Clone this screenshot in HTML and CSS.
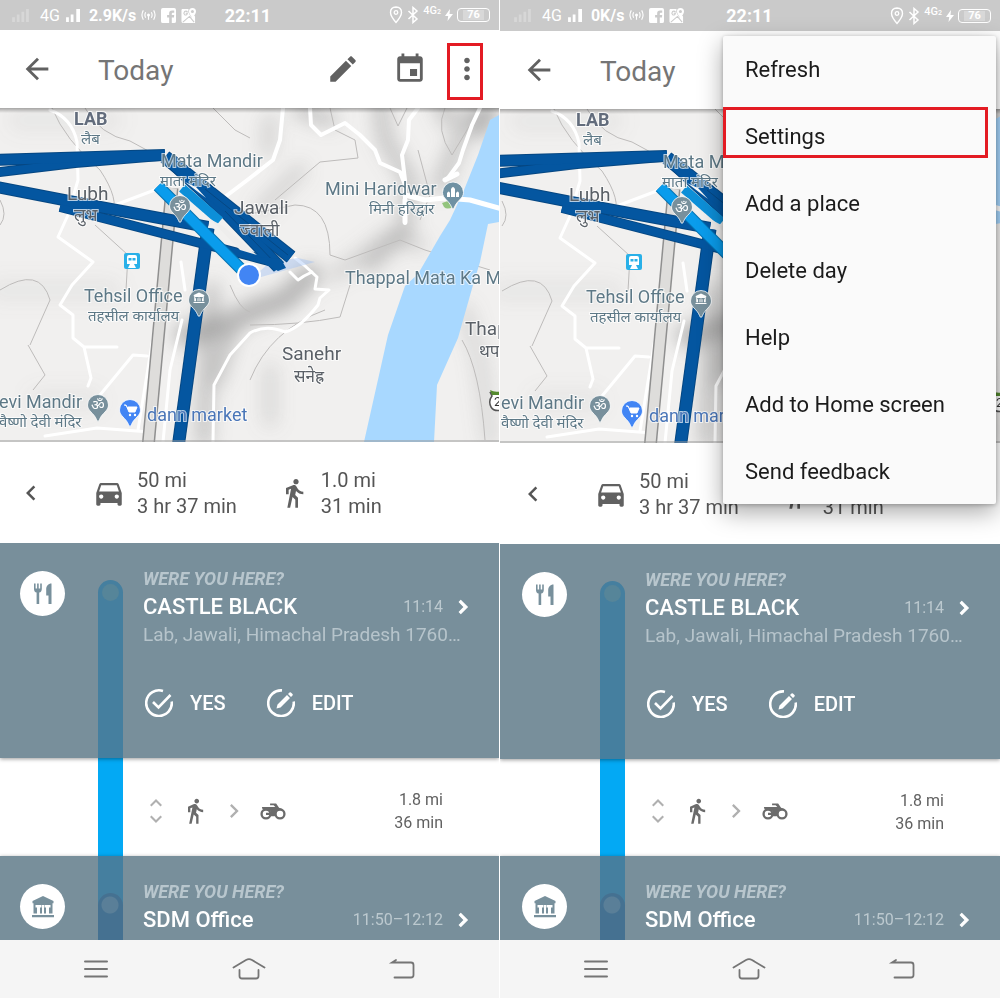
FILE: index.html
```html
<!DOCTYPE html>
<html lang="en">

<head>
    <meta charset="utf-8" />
    <meta name="viewport" content="width=device-width, initial-scale=1" />

    <title>Timeline - Today</title>

    <link rel="stylesheet" href="styles.css">
</head>

<body>
    <!-- shared shapes -->
    <svg class="defs" aria-hidden="true">
        <defs>
            <filter id="soft" x="-50%" y="-50%" width="200%" height="200%">
                <feGaussianBlur stdDeviation="9" />
            </filter>
            <linearGradient id="edge" x1="0" y1="0" x2="0" y2="1">
                <stop offset="0" stop-color="#000" stop-opacity=".3" />
                <stop offset="1" stop-color="#000" stop-opacity="0" />
            </linearGradient>
        </defs>

        <symbol id="back" viewBox="0 0 24 24"><path d="M20 11H7.83l5.59-5.59L12 4l-8 8 8 8 1.41-1.41L7.83 13H20v-2z" /></symbol>
        <symbol id="pencil" viewBox="0 0 24 24"><path d="M3 17.25V21h3.75L17.81 9.94l-3.75-3.75L3 17.25zM20.71 7.04c.39-.39.39-1.02 0-1.41l-2.34-2.34c-.39-.39-1.02-.39-1.41 0l-1.83 1.83 3.75 3.75 1.83-1.83z" /></symbol>
        <symbol id="event" viewBox="0 0 24 24"><path d="M17 12h-5v5h5v-5zM16 1v2H8V1H6v2H5c-1.11 0-1.99.9-1.99 2L3 19c0 1.1.89 2 2 2h14c1.1 0 2-.9 2-2V5c0-1.1-.9-2-2-2h-1V1h-2zm3 18H5V8h14v11z" /></symbol>
        <symbol id="more" viewBox="0 0 24 24"><path d="M12 8c1.100 0 2-.9 2-2s-.9-2-2-2-2 .9-2 2 .9 2 2 2zm0 2c-1.100 0-2 .9-2 2s.9 2 2 2 2-.9 2-2-.9-2-2-2zm0 6c-1.100 0-2 .9-2 2s.9 2 2 2 2-.9 2-2-.9-2-2-2z" /></symbol>
        <symbol id="left" viewBox="0 0 24 24"><path d="M15.410 7.410L14 6l-6 6 6 6 1.410-1.410L10.830 12z" /></symbol>
        <symbol id="right" viewBox="0 0 24 24"><path d="M10 6L8.590 7.410 13.170 12l-4.580 4.590L10 18l6-6z" /></symbol>
        <symbol id="unfold" viewBox="0 0 24 24"><path d="M7.500 7.500L12 3l4.500 4.500M7.500 16.500L12 21l4.500-4.500" fill="none" stroke="currentColor" stroke-width="1.800" /></symbol>
        <symbol id="car" viewBox="0 0 24 24"><path d="M18.920 6.010C18.720 5.420 18.160 5 17.500 5h-11c-.66 0-1.210.42-1.420 1.010L3 12v8c0 .55.45 1 1 1h1c.55 0 1-.45 1-1v-1h12v1c0 .55.45 1 1 1h1c.55 0 1-.45 1-1v-8l-2.080-5.990zM6.500 16c-.83 0-1.500-.67-1.500-1.500S5.670 13 6.500 13s1.500.67 1.500 1.500S7.330 16 6.500 16zm11 0c-.83 0-1.500-.67-1.500-1.500s.67-1.500 1.500-1.500 1.500.67 1.500 1.500-.67 1.500-1.500 1.500zM5 11l1.500-4.500h11L19 11H5z" /></symbol>
        <symbol id="walk" viewBox="0 0 24 24"><path d="M13.500 5.500c1.100 0 2-.9 2-2s-.9-2-2-2-2 .9-2 2 .9 2 2 2zM9.800 8.900L7 23h2.100l1.800-8 2.100 2v6h2v-7.500l-2.100-2 .6-3C14.800 12 16.800 13 19 13v-2c-1.900 0-3.500-1-4.300-2.400l-1-1.600c-.4-.6-1-1-1.700-1-.3 0-.5.1-.8.1L6 8.300V13h2V9.600l1.800-.7" /></symbol>
        <symbol id="moto" viewBox="0 0 24 24">
            <g fill="none" stroke="currentColor" stroke-width="2">
                <circle cx="6" cy="14.500" r="3.800" />
                <circle cx="18" cy="14.500" r="3.800" />
            </g>
            <path d="M9.500 5.500h5.200l2.500 3.800 3.300 1.200-5 1.500-2 4.500H9.500L10 12 3 10.500 2.500 8.500H14L12.500 7h-3zM6 13.500h5v2H6z" />
        </symbol>
        <symbol id="yes" viewBox="0 0 28 28">
            <path d="M18 2A12.800 12.800 0 1 0 26.700 12.500M8 13l5.500 5.500L25.500 6" fill="none" stroke="currentColor" stroke-width="2.600" />
        </symbol>
        <symbol id="edit" viewBox="0 0 28 28">
            <path d="M15 1.400A12.800 12.800 0 1 0 26.700 12.500" fill="none" stroke="currentColor" stroke-width="2.600" />
            <path d="M10.500 15.500L20 6l3 3-9.500 9.500-4 1zM21 5l1.500-1.500q.7-.7 1.400 0l1.600 1.600q.7.700 0 1.400L24 8z" />
        </symbol>
        <symbol id="food" viewBox="0 0 24 24">
            <path d="M3 1.500h1.600v5h1.500v-5h1.600v5h1.500v-5h1.600V7c0 2-1 3.200-2.600 3.600V22H5.600V10.600C4 10.200 3 9 3 7zM20.500 1.500V22H17.500v-8.500h-2.300V7c0-3 2-5.500 5.300-5.500z" />
        </symbol>
        <symbol id="bank" viewBox="0 0 24 24">
            <path d="M12 1l10.500 5v2.300h-21V6zM2.500 8h19v10.500H18V12.500h1.500V10h-6v2.500H15v6h-2V10h-2v8.500H9v-6h1.500V10h-6v2.500H6v6H2.500zM1 20h22v2.200H1z" />
        </symbol>

        <symbol id="bars" viewBox="0 0 18 14"><path d="M0 9h3v5H0zM5 6h3v8H5zM10 3h3v11h-3zM15 0h3v14h-3z" /></symbol>
        <symbol id="signal" viewBox="0 0 16 14"><path d="M0 9h3v5H0zM5 6h3v8H5zM11 0h4v14h-4z" /></symbol>
        <symbol id="hotspot" viewBox="0 0 16 14">
            <circle cx="8" cy="6.500" r="1.600" />
            <path d="M8 7v4.500M5 3.500Q3.300 6.500 5 9.500M11 3.500q1.700 3 0 6M2.500 1.500q-3 5 0 10M13.500 1.500q3 5 0 10" fill="none" stroke="currentColor" stroke-width="1.200" />
        </symbol>
        <symbol id="social" viewBox="0 0 16 16"><path d="M2 0h12q2 0 2 2v12q0 2-2 2h-2.500v-6h2.300l.3-2.500h-2.600V6q0-1 1-1h1.600V2.700h-2.300Q8.700 2.700 8.700 5.600v1.900H6.500V10h2.200v6H2q-2 0-2-2V2q0-2 2-2z" /></symbol>
        <symbol id="mapapp" viewBox="0 0 16 16">
            <path d="M1 1h7q-1 3 1 6l2 3 3-2 1 1v7H2q-1.500 0-1.500-1.500v-12zM12.200 0Q16 0 16 3.800 16 6 12.200 11 8.500 6 8.500 3.800 8.500 0 12.200 0z" />
            <circle cx="12.200" cy="3.800" r="1.600" fill="#ccc" />
            <path d="M7 4.300Q5.500 2.600 3.800 3.800q-1.500 1.700 0 3.400Q6.500 8 6.800 5.600H5M2 15l7-6 5 6" fill="none" stroke="#ccc" stroke-width="1.200" />
        </symbol>
        <symbol id="location" viewBox="0 0 14 18">
            <path d="M7 1q5.500.2 5.500 5.500Q12.500 10 7 16.500 1.500 10 1.500 6.500 1.500 1.200 7 1z" fill="none" stroke="currentColor" stroke-width="1.400" />
            <circle cx="7" cy="6.500" r="1.800" fill="none" stroke="currentColor" stroke-width="1.300" />
        </symbol>
        <symbol id="bluetooth" viewBox="0 0 12 18"><path d="M1.500 5l8.500 8-4 3.500v-15L10 5l-8.500 8" fill="none" stroke="currentColor" stroke-width="1.500" /></symbol>
        <symbol id="bolt" viewBox="0 0 8 12"><path d="M5 0L0 7h3.200L2.500 12 8 5H4.500z" /></symbol>

        <symbol id="menukey" viewBox="0 0 34 24"><path d="M6 4.500h22M6 12h22M6 19.500h22" fill="none" stroke="currentColor" stroke-width="2" stroke-linecap="round" /></symbol>
        <symbol id="homekey" viewBox="0 0 34 24"><path d="M1.500 10.500L14 3q3-1.600 6 0l12.500 7.500M7.500 13v6q0 2.500 2.500 2.500h14q2.500 0 2.500-2.500v-6" fill="none" stroke="currentColor" stroke-width="1.800" stroke-linecap="round" /></symbol>
        <symbol id="backkey" viewBox="0 0 34 24"><path d="M9.500 20.500H26q2.500 0 2.500-2.500V8q0-2.500-2.500-2.500H7l4-2.500" fill="none" stroke="currentColor" stroke-width="1.800" stroke-linecap="round" /></symbol>

        <symbol id="pin" viewBox="0 0 22 28"><path d="M11 .5a10.500 10.500 0 0 1 10.500 10.500c0 6-6.500 8-9 14.500q-1.500 4-3 0C7 19 .5 17 .5 11A10.500 10.500 0 0 1 11 .5z" stroke="#fff" stroke-width=".8" /></symbol>

        <!-- map artwork: terrain, roads, water, recorded tracks -->
        <g id="terrain">
            <rect x="-10" y="100" width="530" height="350" fill="#f1f0ef" />
            <g fill="none" stroke="#8d8d8d" filter="url(#soft)" stroke-linecap="round" stroke-linejoin="round">
                <path d="M380 100L385 140 410 180 405 230 370 265M470 110L455 150 440 185M440 100L448 120M330 120L300 110" stroke-width="15" opacity=".45" />
                <path d="M185 335Q230 325 255 310L285 300 310 275" stroke-width="22" opacity=".6" />
                <path d="M212 290L207 340 204 440M230 335L215 380" stroke-width="16" opacity=".45" />
                <path d="M335 275L390 235 420 245M300 170L260 210M270 120L268 150" stroke-width="14" opacity=".3" />
                <path d="M465 310L480 360 490 440M270 370V420" stroke-width="14" opacity=".25" />
                <path d="M0 290H110M20 120L110 120M40 400H90" stroke-width="26" opacity=".08" />
                <path d="M490 108L480 130" stroke-width="16" opacity=".7" />
            </g>
            <g fill="none" stroke="#bdbbba" stroke-width="1">
                <path d="M85 108Q100 135 130 141L165 160M330 108L335 130 355 140 358 158 320 162 275 200M390 108L398 126 407 108M445 108Q435 130 452 155L470 125M213 108L235 130 250 138M0 200Q8 215 0 225M52 108Q65 140 100 170 120 200 112 215M95 225L128 255 126 290M28 345L45 375 33 390M0 290Q40 265 50 300L30 345M250 325Q300 325 340 317L350 285M250 380Q270 330 325 310M330 255Q330 205 295 205L245 215M330 255L345 260 400 240 425 250 490 270M418 150L430 195 420 220M462 340Q480 370 485 440M230 285Q240 310 250 312" />
            </g>
            <path d="M499 115L490 120 478 155 464 190 450 220 440 236 418 274 405 286 388 335 364 442H434L437 385 458 338 473 285 480 262 488 224 499 222 520 222V115z" fill="#a8d8ff" />
            <path d="M442 203l9-3 2 7q-6 3-9 0z" fill="#93c47d" />
            <g fill="none" stroke="#fff" stroke-linejoin="round" stroke-linecap="round">
                <path d="M50 110Q72 118 77 142L78 180 68 215 58 237 93 262 72 285 60 305 73 315 73 338 84 347 91 378 88 386M84 347H117M115 205L160 188M100 395L133 355 147 356M155 325L138 430M45 436L97 428 150 432M182 320L170 370 163 442M181 262L185 290" stroke-width="3" />
                <path d="M310 108L311 125 321 135 345 123 360 135 375 150 380 163 400 172 405 185V223M418 108L409 120 408 140 402 155 405 180M480 108L472 125 463 150 459 163 448 178M283 108L280 140 273 160 250 178 205 212" stroke-width="4" />
                <path d="M405 195L425 200 445 198 470 200 502 209M445 180l12-6M405 200v22" stroke-width="5" />
                <path d="M213 442L214 385 230 355 250 333Q266 324 285 332 300 328 318 305L320 298 329 290 315 289 317 277 304 265 295 258M290 272L298 280 304 276 312 272" stroke-width="3" />
            </g>
            <path d="M172 188L148 448" stroke="#8f8f8f" stroke-width="13" />
            <path d="M172 188L148 448" stroke="#dedddb" stroke-width="10" />

            <path d="M250 280L315 262 298 258 270 262z" fill="#8fb6f5" opacity=".35" />
            <g fill="none" stroke-linejoin="round">
                <g stroke="#064782">
                    <path d="M208 228L178 448" stroke-width="13" />
                    <path d="M-8 173L75 163 160 156M60 207L103 218 200 243 250 256 280 264" stroke-width="10" />
                    <path d="M-8 160L165 155M-8 186L100 207 208 227" stroke-width="12" />
                    <path d="M170 160L225 211 279 267" stroke-width="14" />
                    <path d="M165 157L291 257" stroke-width="14" />
                </g>
                <g stroke="#0456a0">
                    <path d="M208 228L178 448" stroke-width="11" />
                    <path d="M-8 173L75 163 160 156M60 207L103 218 200 243 250 256 280 264" stroke-width="8" />
                    <path d="M-8 160L165 155M-8 186L100 207 208 227" stroke-width="10" />
                    <path d="M170 160L225 211 279 267" stroke-width="12" />
                    <path d="M165 157L291 257" stroke-width="12" />
                </g>
                <path d="M225 211L279 267M205 189L288 255" stroke="#064782" stroke-width="1" />
            </g>
            <path d="M250 256L278 271 286 268 281 259z" fill="#0456a0" />
            <path d="M182 188L220 221" stroke="#0d8fd8" stroke-width="9" />
            <path d="M210 219L223 226 257 255 240 250z" fill="#eeedec" />
            <path d="M185 182L196 187 206 198z" fill="#f7f7f7" />
            <path d="M158 186L252 280" stroke="#0471b0" stroke-width="12" />
            <path d="M158 186L252 280" stroke="#0a9cec" stroke-width="10" />
            <circle cx="249" cy="275" r="11" fill="#4285f4" stroke="#fff" stroke-width="2" />

            <g>
                <use href="#pin" x="169" y="195" width="22" height="28" fill="#78909c" />
                <use href="#pin" x="188" y="288" width="22" height="30" fill="#78909c" />
                <use href="#pin" x="87" y="393" width="22" height="30" fill="#78909c" />
                <use href="#pin" x="442" y="181" width="22" height="29" fill="#6f91a3" />
                <use href="#pin" x="119" y="398" width="22" height="30" fill="#4285f4" />
                <use href="#bank" x="193" y="292" width="12" height="12" fill="#fff" />
                <path d="M447 197v-4q2-3 3 0v4zM451 197v-8q2-4 4 0v8zM456 197v-4q2-3 3 0v4z" fill="#fff" />
                <path d="M124 405h2l3 7h6l2-5h-9" fill="#fff" stroke="#fff" />
                <circle cx="130" cy="415" r="1.200" fill="#fff" />
                <circle cx="135" cy="415" r="1.200" fill="#fff" />
                <rect x="124" y="253" width="16" height="16" rx="2" fill="#29b0e8" />
                <path d="M127 257q0-2 2-2h6q2 0 2 2v7h-10zM128 268l2-4h4l2 4" fill="#fff" />
                <path d="M128.500 258h3v2.500h-3zM132.500 258h3v2.500h-3z" fill="#29b0e8" />
            </g>
            <path d="M490 392q4 3 12 0v18q-8 2-11-3-3-6 1-11z" fill="#fff" stroke="#555" stroke-width="1.500" />
            <path d="M490 390q5 3 12 1v4h-10z" fill="#558b2f" />
            <rect x="-10" y="108" width="530" height="5" fill="url(#edge)" />
            <path d="M-10 441h530" stroke="#999" stroke-width="2" opacity=".5" />
        </g>
    </svg>

    <div class="screens">
        <main class="phone">
            <div class="status">
                <div class="status-group">
                    <svg class="ic-bars faint"><use href="#bars" /></svg>
                    <span class="net">4G</span>
                    <svg class="ic-bars"><use href="#signal" /></svg>
                    <b class="speed">2.9K/s</b>
                    <svg class="ic-small"><use href="#hotspot" /></svg>
                    <svg class="ic-small"><use href="#social" /></svg>
                    <svg class="ic-small"><use href="#mapapp" /></svg>
                </div>
                <b class="clock">22:11</b>
                <div class="status-group end">
                    <svg class="ic-loc"><use href="#location" /></svg>
                    <svg class="ic-bt"><use href="#bluetooth" /></svg>
                    <span class="sim">4G<sub>2</sub></span>
                    <svg class="ic-bolt"><use href="#bolt" /></svg>
                    <span class="battery"><b>76</b></span>
                </div>
            </div>

            <header class="toolbar">
                <button class="icon-btn" aria-label="Back"><svg><use href="#back" /></svg></button>
                <h1>Today</h1>
                <button class="icon-btn edit-btn" aria-label="Edit"><svg><use href="#pencil" /></svg></button>
                <button class="icon-btn" aria-label="Pick a date"><svg><use href="#event" /></svg></button>
                <button class="more-btn marked" aria-label="More options"><svg><use href="#more" /></svg></button>
            </header>

            <svg class="map" viewBox="0 108 499 334" preserveAspectRatio="xMinYMin slice" role="img" aria-label="Map of the day">
                <use href="#terrain" />
                <g class="labels">
                    <text class="town" x="74" y="125">LAB</text>
                    <text class="hindi" x="81" y="144">लैब</text>
                    <text x="161" y="167">Mata Mandir</text>
                    <text class="hindi" x="160" y="186">माता मंदिर</text>
                    <text class="area" x="67" y="200">Lubh</text>
                    <text class="hindi area" x="74" y="221">लुभ</text>
                    <text class="area" x="234" y="214">Jawali</text>
                    <text class="hindi area" x="240" y="236">ज्वाली</text>
                    <text x="325" y="195">Mini Haridwar</text>
                    <text class="hindi" x="369" y="214">मिनी हरिद्वार</text>
                    <text x="345" y="284">Thappal Mata Ka Mandir</text>
                    <text x="84" y="302">Tehsil Office</text>
                    <text class="hindi" x="88" y="321">तहसील कार्यालय</text>
                    <text class="area" x="282" y="360">Sanehr</text>
                    <text class="hindi area" x="294" y="382">सनेह्र</text>
                    <text class="area" x="465" y="335">Thapkour</text>
                    <text class="hindi area" x="479" y="357">थपकौर</text>
                    <text x="-1" y="408">evi Mandir</text>
                    <text class="hindi" x="-1" y="427">वैष्णो देवी मंदिर</text>
                    <text class="shop" x="147" y="421">dann market</text>
                    <text class="glyph" x="173" y="212">ॐ</text>
                    <text class="glyph" x="91" y="410">ॐ</text>
                    <text class="shield" x="494" y="406">2</text>
                </g>
            </svg>

            <section class="summary">
                <button class="prev" aria-label="Previous"><svg><use href="#left" /></svg></button>
                <div class="mode drive">
                    <svg><use href="#car" /></svg>
                    <p>50 mi<br>3 hr 37 min</p>
                </div>
                <div class="mode foot">
                    <svg><use href="#walk" /></svg>
                    <p>1.0 mi<br>31 min</p>
                </div>
            </section>

            <div class="timeline">
                <article class="place">
                    <span class="badge"><svg><use href="#food" /></svg></span>
                    <div class="rail start"><i></i></div>
                    <div class="info">
                        <p class="ask">WERE YOU HERE?</p>
                        <a class="name-row" href="#">
                            <h2>CASTLE BLACK</h2>
                            <time>11:14</time>
                            <svg><use href="#right" /></svg>
                        </a>
                        <p class="address">Lab, Jawali, Himachal Pradesh 176023, India</p>
                        <div class="actions">
                            <button><svg><use href="#yes" /></svg>YES</button>
                            <button><svg><use href="#edit" /></svg>EDIT</button>
                        </div>
                    </div>
                </article>

                <div class="travel">
                    <div class="rail"></div>
                    <div class="legs">
                        <svg class="light"><use href="#unfold" /></svg>
                        <svg><use href="#walk" /></svg>
                        <svg class="light"><use href="#right" /></svg>
                        <svg><use href="#moto" /></svg>
                    </div>
                    <p class="distance">1.8 mi<br>36 min</p>
                </div>

                <article class="place">
                    <span class="badge"><svg><use href="#bank" /></svg></span>
                    <div class="rail through"><i></i></div>
                    <div class="info">
                        <p class="ask">WERE YOU HERE?</p>
                        <a class="name-row" href="#">
                            <h2>SDM Office</h2>
                            <time>11:50–12:12</time>
                            <svg><use href="#right" /></svg>
                        </a>
                    </div>
                </article>
            </div>

            <nav class="keys">
                <button aria-label="Recent apps"><svg><use href="#menukey" /></svg></button>
                <button aria-label="Home"><svg><use href="#homekey" /></svg></button>
                <button aria-label="Back"><svg><use href="#backkey" /></svg></button>
            </nav>
        </main>

        <section class="phone second">
            <div class="status">
                <div class="status-group">
                    <svg class="ic-bars faint"><use href="#bars" /></svg>
                    <span class="net">4G</span>
                    <svg class="ic-bars"><use href="#signal" /></svg>
                    <b class="speed">0K/s</b>
                    <svg class="ic-small"><use href="#hotspot" /></svg>
                    <svg class="ic-small"><use href="#social" /></svg>
                    <svg class="ic-small"><use href="#mapapp" /></svg>
                </div>
                <b class="clock">22:11</b>
                <div class="status-group end">
                    <svg class="ic-loc"><use href="#location" /></svg>
                    <svg class="ic-bt"><use href="#bluetooth" /></svg>
                    <span class="sim">4G<sub>2</sub></span>
                    <svg class="ic-bolt"><use href="#bolt" /></svg>
                    <span class="battery"><b>76</b></span>
                </div>
            </div>

            <header class="toolbar">
                <button class="icon-btn" aria-label="Back"><svg><use href="#back" /></svg></button>
                <h1>Today</h1>
            </header>

            <svg class="map" viewBox="-2 108 500 334" preserveAspectRatio="xMinYMin slice" role="img" aria-label="Map of the day">
                <use href="#terrain" />
                <g class="labels">
                    <text class="town" x="74" y="125">LAB</text>
                    <text class="hindi" x="81" y="144">लैब</text>
                    <text x="161" y="167">Mata Mandir</text>
                    <text class="hindi" x="160" y="186">माता मंदिर</text>
                    <text class="area" x="67" y="200">Lubh</text>
                    <text class="hindi area" x="74" y="221">लुभ</text>
                    <text x="84" y="302">Tehsil Office</text>
                    <text class="hindi" x="88" y="321">तहसील कार्यालय</text>
                    <text x="-1" y="408">evi Mandir</text>
                    <text class="hindi" x="-1" y="427">वैष्णो देवी मंदिर</text>
                    <text class="shop" x="147" y="421">dann market</text>
                    <text class="glyph" x="173" y="212">ॐ</text>
                    <text class="glyph" x="91" y="410">ॐ</text>
                    <text class="shield" x="494" y="406">2</text>
                </g>
            </svg>

            <section class="summary">
                <button class="prev" aria-label="Previous"><svg><use href="#left" /></svg></button>
                <div class="mode drive">
                    <svg><use href="#car" /></svg>
                    <p>50 mi<br>3 hr 37 min</p>
                </div>
                <div class="mode foot">
                    <svg><use href="#walk" /></svg>
                    <p>1.0 mi<br>31 min</p>
                </div>
            </section>

            <div class="timeline">
                <article class="place">
                    <span class="badge"><svg><use href="#food" /></svg></span>
                    <div class="rail start"><i></i></div>
                    <div class="info">
                        <p class="ask">WERE YOU HERE?</p>
                        <a class="name-row" href="#">
                            <h2>CASTLE BLACK</h2>
                            <time>11:14</time>
                            <svg><use href="#right" /></svg>
                        </a>
                        <p class="address">Lab, Jawali, Himachal Pradesh 176023, India</p>
                        <div class="actions">
                            <button><svg><use href="#yes" /></svg>YES</button>
                            <button><svg><use href="#edit" /></svg>EDIT</button>
                        </div>
                    </div>
                </article>

                <div class="travel">
                    <div class="rail"></div>
                    <div class="legs">
                        <svg class="light"><use href="#unfold" /></svg>
                        <svg><use href="#walk" /></svg>
                        <svg class="light"><use href="#right" /></svg>
                        <svg><use href="#moto" /></svg>
                    </div>
                    <p class="distance">1.8 mi<br>36 min</p>
                </div>

                <article class="place">
                    <span class="badge"><svg><use href="#bank" /></svg></span>
                    <div class="rail through"><i></i></div>
                    <div class="info">
                        <p class="ask">WERE YOU HERE?</p>
                        <a class="name-row" href="#">
                            <h2>SDM Office</h2>
                            <time>11:50–12:12</time>
                            <svg><use href="#right" /></svg>
                        </a>
                    </div>
                </article>
            </div>

            <nav class="keys">
                <button aria-label="Recent apps"><svg><use href="#menukey" /></svg></button>
                <button aria-label="Home"><svg><use href="#homekey" /></svg></button>
                <button aria-label="Back"><svg><use href="#backkey" /></svg></button>
            </nav>

            <div class="menu">
                <button>Refresh</button>
                <button class="marked">Settings</button>
                <button>Add a place</button>
                <button>Delete day</button>
                <button>Help</button>
                <button>Add to Home screen</button>
                <button>Send feedback</button>
            </div>
        </section>
    </div>
</body>

</html>
```
FILE: styles.css
```css
* {
    box-sizing: border-box;
}

body {
    margin: 0;
    background: #fff;
    color: #616161;
    font-family: Roboto, "Noto Sans", sans-serif;
}

h1,
h2,
p {
    margin: 0;
    font-weight: 400;
}

button {
    border: 0;
    padding: 0;
    background: none;
    color: inherit;
    font: inherit;
    cursor: pointer;
}

svg {
    display: block;
    fill: currentColor;
    flex-shrink: 0;
}

.defs {
    position: absolute;
    width: 0;
    height: 0;
}

.screens {
    display: grid;
    grid-template-columns: 499fr 500fr;
    gap: 1px;
}

.phone {
    --inset: 0px;
    position: relative;
    display: flex;
    flex-direction: column;
    height: 100vh;
    min-width: 0;
    overflow: hidden;
}

.second {
    --inset: 2px;
}

/* status bar */
.status {
    display: grid;
    grid-template-columns: 1fr auto 1fr;
    align-items: center;
    flex: 0 0 30px;
    padding: 0 9px 0 calc(12px + var(--inset));
    background: #cacaca;
    color: #fff;
}

.second .status {
    flex-basis: 31px;
}

.status-group {
    display: flex;
    align-items: center;
    gap: 5px;
}

.status-group.end {
    justify-content: flex-end;
    gap: 4px;
}

.ic-bars {
    width: 17px;
    height: 13px;
}

.faint {
    opacity: .25;
}

.net {
    margin-left: 6px;
    font-size: 16px;
}

.speed {
    margin-left: 2px;
    font-size: 16px;
}

.ic-small {
    width: 15px;
    height: 15px;
}

.clock {
    margin-right: 6px;
    font-size: 18px;
}

.ic-loc {
    width: 14px;
    height: 18px;
}

.ic-bt {
    width: 12px;
    height: 18px;
}

.sim {
    align-self: flex-start;
    font-size: 11px;
    font-weight: 500;
    line-height: 10px;
}

.sim sub {
    font-size: 7px;
    vertical-align: baseline;
}

.ic-bolt {
    width: 8px;
    height: 12px;
}

.battery {
    width: 33px;
    height: 14px;
    padding: 1px 5px;
    border: 1px solid #fff;
    border-radius: 4px;
    font-size: 11px;
    line-height: 10px;
    text-align: center;
}

.battery b {
    display: block;
    background: #d8d8d8;
}

/* toolbar */
.toolbar {
    display: flex;
    align-items: center;
    flex: 0 0 78px;
    padding: 0 16px 0 calc(20px + var(--inset));
}

.toolbar h1 {
    flex: 1;
    margin-left: 44px;
    padding-top: 2px;
    color: #757575;
    font-size: 28px;
}

.icon-btn svg,
.more-btn svg {
    width: 34px;
    height: 34px;
}

.edit-btn {
    margin-right: 33px;
}

.more-btn {
    width: 36px;
    height: 57px;
    margin: 5px 0 0 20px;
    padding-bottom: 5px;
}

.more-btn.marked {
    border: 3px solid #e31b23;
}

/* map */
.map {
    flex: 0 0 334px;
    width: 100%;
}

.labels text {
    fill: #5d7886;
    stroke: #fff;
    stroke-opacity: .7;
    stroke-width: 2px;
    paint-order: stroke;
    font-size: 18px;
}

.labels .area {
    fill: #5a6067;
    font-size: 19px;
}

.labels .town {
    fill: #626c7c;
    font-size: 18px;
    font-weight: 700;
}

.labels .hindi {
    font-size: 15px;
}

.labels .hindi.area {
    font-size: 17px;
}

.labels .shop {
    fill: #4a76b8;
}

.labels .glyph {
    fill: #fff;
    stroke: none;
    font-size: 15px;
}

.labels .shield {
    fill: #333;
    font-size: 13px;
}

/* day totals */
.summary {
    display: flex;
    align-items: center;
    flex: 0 0 101px;
    padding-left: calc(20px + var(--inset));
    color: #555;
    font-size: 20px;
    line-height: 26px;
}

.prev svg {
    width: 30px;
    height: 30px;
}

.prev {
    width: 30px;
    margin-left: -4px;
}

.mode {
    display: flex;
    align-items: center;
    gap: 11px;
}

.mode svg {
    width: 34px;
    height: 34px;
    color: #616161;
}

.drive {
    margin-left: 46px;
}

.foot {
    margin-left: 41px;
}

.foot svg {
    width: 32px;
    height: 32px;
}

/* timeline */
.timeline {
    flex: 1;
    min-height: 0;
    overflow: hidden;
}

.place {
    position: relative;
    display: flex;
    padding-left: calc(20px + var(--inset));
    background: #788f9b;
    box-shadow: 0 1px 4px rgba(0, 0, 0, .4);
}

.badge {
    display: grid;
    place-items: center;
    flex: 0 0 45px;
    height: 45px;
    margin: 28px 33px 0 0;
    border-radius: 50%;
    background: #fff;
    color: #78909c;
}

.badge svg {
    width: 24px;
    height: 24px;
}

.rail {
    flex: 0 0 25px;
    background: #03a9f4;
}

.start {
    margin-top: 37px;
    padding-top: 4px;
    border-radius: 13px 13px 0 0;
    background: #457f9f;
}

.through {
    padding-top: 37px;
    background: #457f9f;
}

.rail i {
    display: block;
    width: 17px;
    height: 17px;
    margin: 0 auto;
    border-radius: 50%;
    background: #568599;
}

.through i {
    height: 100%;
    width: 25px;
    border-radius: 13px 13px 0 0;
    background: radial-gradient(circle at 12px 12px, #5a7f98 8px, #457191 9px);
}

.info {
    flex: 1;
    min-width: 0;
    padding: 24px 30px 31px 20px;
}

.ask {
    color: #b8c6cd;
    font-size: 18px;
    font-style: italic;
    font-weight: 700;
    line-height: 24px;
}

.name-row {
    display: flex;
    align-items: center;
    color: #fff;
    line-height: 32px;
    text-decoration: none;
}

.name-row h2 {
    flex: 1;
    font-size: 22px;
    font-weight: 500;
}

.name-row time {
    color: #bcc9cf;
    font-size: 16px;
}

.name-row svg {
    width: 26px;
    height: 26px;
    margin: 0 -7px 0 7px;
    stroke: currentColor;
}

.address {
    overflow: hidden;
    color: #b6c4cb;
    font-size: 19px;
    line-height: 24px;
    text-overflow: ellipsis;
    white-space: nowrap;
}

.actions {
    display: flex;
    gap: 39px;
    margin-top: 32px;
    color: #fff;
}

.actions button {
    display: flex;
    align-items: center;
    gap: 17px;
    height: 48px;
    margin-left: 2px;
    font-size: 20px;
    font-weight: 500;
}

.actions svg {
    width: 28px;
    height: 28px;
}

.travel {
    display: flex;
    align-items: center;
    height: 98px;
    padding: 0 56px 0 calc(98px + var(--inset));
    font-size: 16px;
    line-height: 23px;
}

.second .travel {
    height: 97px;
}

.travel .rail {
    align-self: stretch;
}

.legs {
    display: flex;
    flex: 1;
    gap: 11px;
    margin-left: 19px;
    padding-top: 7px;
    color: #6b6b6b;
}

.legs svg {
    width: 28px;
    height: 28px;
}

.legs .light {
    color: #b0b0b0;
}

.distance {
    padding-top: 8px;
    text-align: right;
}

/* system keys */
.keys {
    position: relative;
    display: grid;
    grid-template-columns: repeat(3, 1fr);
    flex: 0 0 58px;
    padding: 0 21px 0 19px;
    background: #f5f5f5;
    color: #757575;
}

.keys svg {
    width: 34px;
    height: 24px;
    margin: 0 auto;
}

/* overflow menu */
.menu {
    position: absolute;
    top: 36px;
    right: 4px;
    display: flex;
    flex-direction: column;
    width: 273px;
    border-radius: 2px;
    background: #fafafa;
    box-shadow: 0 8px 24px rgba(0, 0, 0, .35), 0 1px 4px rgba(0, 0, 0, .25);
    color: #1b1b1b;
    font-size: 22px;
}

.menu button {
    position: relative;
    height: 67px;
    padding: 0 22px;
    text-align: left;
}

.menu button:last-child {
    height: 66px;
}

.menu .marked::after {
    content: "";
    position: absolute;
    inset: 4px 8px 12px 0;
    border: 3px solid #e31b23;
}
```
